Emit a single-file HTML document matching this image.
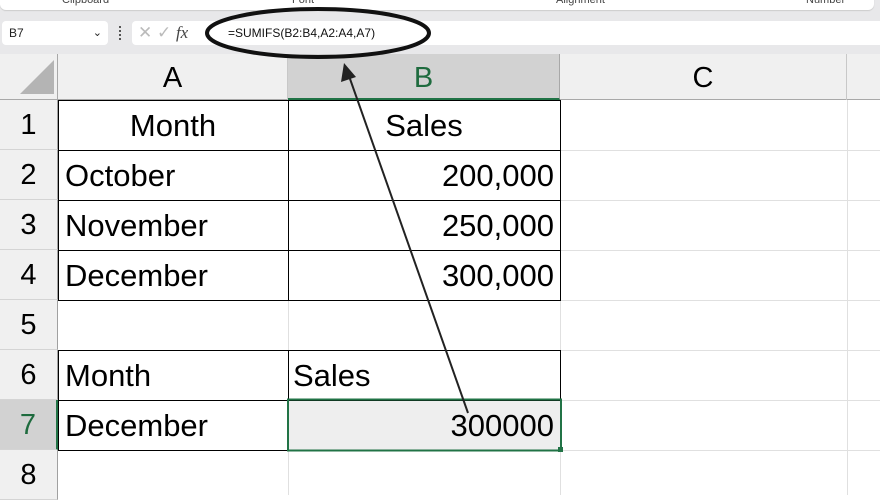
<!DOCTYPE html>
<html><head><meta charset="utf-8"><style>
body{margin:0;width:880px;height:495px;overflow:hidden;background:#fff;font-family:"Liberation Sans",sans-serif;position:relative}
.a{position:absolute;box-sizing:border-box}
.t{font-size:31px;color:#000;line-height:50px;white-space:nowrap}
.rh{left:0;width:58px;text-align:center;background:#f0f0f0;border-bottom:1px solid #d4d4d4;border-right:1px solid #a0a0a0;font-size:29px;line-height:50px;height:50px}
</style></head><body>
<!-- ribbon -->
<div class="a" style="left:0;top:0;width:880px;height:20px;background:#e8e8ea"></div>
<div class="a" style="left:0;top:-10px;width:874px;height:20px;background:#fff;border-radius:0 0 6px 6px;box-shadow:0 1px 1px #ccc"></div>
<div class="a" style="left:62px;top:-6px;font-size:11px;color:#444">Clipboard</div>
<div class="a" style="left:292px;top:-6px;font-size:11px;color:#444">Font</div>
<div class="a" style="left:556px;top:-6px;font-size:11px;color:#444">Alignment</div>
<div class="a" style="left:806px;top:-6px;font-size:11px;color:#444">Number</div>
<!-- formula bar -->
<div class="a" style="left:0;top:20px;width:880px;height:34px;background:#e8e8ea"></div>
<div class="a" style="left:2px;top:21px;width:106px;height:24px;background:#fff;border-radius:4px;font-size:12px;line-height:24px;padding-left:7px;color:#222">B7<span style="position:absolute;right:6px;top:0;font-size:11px">&#8964;</span></div>
<div class="a" style="left:119px;top:26px;width:2px;height:14px;border-left:2px dotted #555"></div>
<div class="a" style="left:132px;top:21px;width:76px;height:24px;background:#fff;border-radius:4px 0 0 4px;font-size:17px;line-height:24px;color:#bbb;padding-left:6px">✕ ✓ <i style="font-family:'Liberation Serif',serif;color:#444">fx</i></div>
<div class="a" style="left:208px;top:21px;width:672px;height:24px;background:#fff;font-size:12px;line-height:24px;padding-left:20px;color:#111">=SUMIFS(B2:B4,A2:A4,A7)</div>
<!-- column headers -->
<div class="a" style="left:0;top:54px;width:880px;height:46px;background:#f0f0f0;border-bottom:1px solid #a8a8a8"></div>
<div class="a" style="left:0;top:54px;width:58px;height:46px;border-right:1px solid #a8a8a8"></div>
<svg class="a" style="left:18px;top:58px" width="38" height="38"><polygon points="36,2 36,36 2,36" fill="#b4b4b4"/></svg>
<div class="a" style="left:58px;top:54px;width:230px;height:46px;border-right:1px solid #c8c8c8;text-align:center;font-size:29px;line-height:48px">A</div>
<div class="a" style="left:288px;top:54px;width:272px;height:46px;background:#d2d2d2;border-bottom:2px solid #217346;border-right:1px solid #a8a8a8;text-align:center;font-size:29px;line-height:48px;color:#1e6b3e">B</div>
<div class="a" style="left:560px;top:54px;width:287px;height:46px;border-right:1px solid #c8c8c8;text-align:center;font-size:29px;line-height:48px">C</div>
<!-- row headers -->
<div class="a rh" style="top:100px">1</div>
<div class="a rh" style="top:150px">2</div>
<div class="a rh" style="top:200px">3</div>
<div class="a rh" style="top:250px">4</div>
<div class="a rh" style="top:300px">5</div>
<div class="a rh" style="top:350px">6</div>
<div class="a rh" style="top:400px;background:#d2d2d2;color:#1e6b3e;border-right:2px solid #217346">7</div>
<div class="a rh" style="top:450px">8</div>
<!-- grid lines -->
<svg class="a" style="left:0;top:0" width="880" height="495">
<g stroke="#e0e0e0" stroke-width="1">
<line x1="58" y1="150.5" x2="880" y2="150.5"/><line x1="58" y1="200.5" x2="880" y2="200.5"/><line x1="58" y1="250.5" x2="880" y2="250.5"/><line x1="58" y1="300.5" x2="880" y2="300.5"/><line x1="58" y1="350.5" x2="880" y2="350.5"/><line x1="58" y1="400.5" x2="880" y2="400.5"/><line x1="58" y1="450.5" x2="880" y2="450.5"/>
<line x1="288.5" y1="100" x2="288.5" y2="495"/><line x1="560.5" y1="100" x2="560.5" y2="495"/><line x1="847.5" y1="100" x2="847.5" y2="495"/>
</g>
<rect x="288" y="400" width="272" height="50" fill="#eeeeee"/>
<g stroke="#000" stroke-width="1" fill="none">
<rect x="58.5" y="100.5" width="502" height="200"/>
<line x1="288.5" y1="100" x2="288.5" y2="300"/>
<line x1="58" y1="150.5" x2="560" y2="150.5"/><line x1="58" y1="200.5" x2="560" y2="200.5"/><line x1="58" y1="250.5" x2="560" y2="250.5"/>
<rect x="58.5" y="350.5" width="502" height="100"/>
<line x1="288.5" y1="350" x2="288.5" y2="450"/><line x1="58" y1="400.5" x2="560" y2="400.5"/>
</g>
<rect x="288" y="399.5" width="273" height="51" fill="none" stroke="#217346" stroke-width="2"/>
<rect x="558" y="447" width="5" height="5" fill="#217346"/>
</svg>
<!-- cell text -->
<div class="a t" style="left:58px;top:101px;width:230px;text-align:center">Month</div>
<div class="a t" style="left:288px;top:101px;width:272px;text-align:center">Sales</div>
<div class="a t" style="left:65px;top:151px">October</div>
<div class="a t" style="left:65px;top:201px">November</div>
<div class="a t" style="left:65px;top:251px">December</div>
<div class="a t" style="left:288px;top:151px;width:266px;text-align:right">200,000</div>
<div class="a t" style="left:288px;top:201px;width:266px;text-align:right">250,000</div>
<div class="a t" style="left:288px;top:251px;width:266px;text-align:right">300,000</div>
<div class="a t" style="left:65px;top:351px">Month</div>
<div class="a t" style="left:293px;top:351px">Sales</div>
<div class="a t" style="left:65px;top:401px">December</div>
<div class="a t" style="left:288px;top:401px;width:266px;text-align:right">300000</div>
<!-- annotation -->
<svg class="a" style="left:0;top:0" width="880" height="495">
<ellipse cx="318" cy="33" rx="111" ry="24" fill="none" stroke="#111" stroke-width="4"/>
<line x1="468" y1="413" x2="349" y2="76" stroke="#222" stroke-width="2"/>
<polygon points="344,63 341,82 356,77" fill="#222"/>
</svg>
</body></html>
